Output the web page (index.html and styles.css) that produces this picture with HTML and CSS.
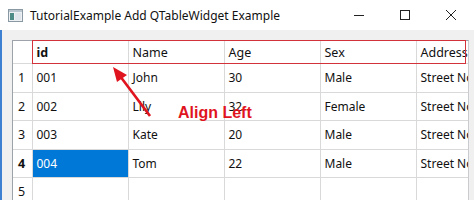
FILE: index.html
```html
<!DOCTYPE html>
<html lang="en">
<head>
    <meta charset="UTF-8">
    <title>TutorialExample Add QTableWidget Example</title>
    <link rel="stylesheet" href="styles.css">
</head>
<body>
    <div class="window">
        <div class="titlebar">
            <svg class="app-icon" width="15" height="13" viewBox="0 0 15 13">
                <rect x="0.5" y="0.5" width="14" height="12" fill="#eef1f3" stroke="#8a98a4"/>
                <rect x="1" y="1" width="13" height="2" fill="#b9c6d0"/>
                <rect x="2" y="4" width="4" height="7" fill="#4f8b86"/>
                <rect x="7" y="4" width="6" height="7" fill="#dfe5ea"/>
            </svg>
            <span class="title">TutorialExample Add QTableWidget Example</span>
            <div class="controls">
                <svg width="46" height="30" viewBox="0 0 46 30"><line x1="18" y1="15.5" x2="28" y2="15.5" stroke="#222" stroke-width="1"/></svg>
                <svg width="46" height="30" viewBox="0 0 46 30"><rect x="18.5" y="10.5" width="9" height="9" fill="none" stroke="#222" stroke-width="1"/></svg>
                <svg width="46" height="30" viewBox="0 0 46 30"><path d="M18 10 L28 20 M28 10 L18 20" stroke="#222" stroke-width="1"/></svg>
            </div>
        </div>
        <div class="client">
            <div class="table-frame">
                <table class="grid">
                    <colgroup>
                        <col class="c-vh"><col class="c-w"><col class="c-w"><col class="c-w"><col class="c-w"><col class="c-w">
                    </colgroup>
                    <tr class="hdr">
                        <th class="corner"></th>
                        <th class="bold">id</th><th>Name</th><th>Age</th><th>Sex</th><th>Address</th>
                    </tr>
                    <tr><td class="vh">1</td><td>001</td><td>John</td><td>30</td><td>Male</td><td>Street No</td></tr>
                    <tr><td class="vh">2</td><td>002</td><td>Lily</td><td>32</td><td>Female</td><td>Street No</td></tr>
                    <tr><td class="vh">3</td><td>003</td><td>Kate</td><td>20</td><td>Male</td><td>Street No</td></tr>
                    <tr><td class="vh bold">4</td><td class="sel">004</td><td>Tom</td><td>22</td><td>Male</td><td>Street No</td></tr>
                    <tr><td class="vh">5</td><td></td><td></td><td></td><td></td><td></td></tr>
                </table>
            </div>
        </div>

        <!-- annotation -->
        <div class="mark-box"></div>
        <svg class="arrow" width="474" height="200" viewBox="0 0 474 200">
            <line x1="150" y1="116" x2="120" y2="76" stroke="#e0141e" stroke-width="2.6"/>
            <polygon points="113,67 127,75 117,82" fill="#e0141e"/>
        </svg>
        <div class="note">Align Left</div>
    </div>
</body>
</html>
```

FILE: styles.css
```css
body {
    margin: 0;
    padding: 0;
    background: #f0f0f0;
    font-family: "Noto Sans", "Liberation Sans", sans-serif;
    overflow: hidden;
}
.window {
    position: relative;
    width: 474px;
    height: 200px;
    overflow: hidden;
    background: #f0f0f0;
}
.titlebar {
    height: 30px;
    background: #fff;
    display: flex;
    align-items: center;
}
.app-icon {
    margin-left: 8px;
    margin-right: 7px;
}
.title {
    font-size: 12px;
    color: #111;
    white-space: nowrap;
}
.controls {
    margin-left: auto;
    display: flex;
}
.controls svg {
    display: block;
}
.client {
    height: 170px;
    box-sizing: border-box;
    padding: 10px 0 0 10px;
    border-left: 2px solid #3d7fd1;
}
.table-frame {
    height: 160px;
    width: 455px;
    overflow: hidden;
    border-top: 1px solid #9ea3a9;
    border-left: 1px solid #9ea3a9;
    border-right: 1px solid #c9cbce;
    background: #fff;
}
.grid {
    border-collapse: collapse;
    table-layout: fixed;
    width: 499px;
    font-size: 12px;
    color: #111;
}
.c-vh { width: 19px; }
.c-w { width: 96px; }
.grid th, .grid td {
    border-right: 1px solid #d9d9d9;
    border-bottom: 1px solid #d9d9d9;
    text-align: left;
    padding: 0 0 0 4px;
    white-space: nowrap;
    overflow: hidden;
}
.grid th {
    font-weight: normal;
    height: 22px;
    font-size: 12.5px;
}
.grid td {
    height: 27.5px;
}
.grid .bold {
    font-weight: bold;
}
.grid .vh {
    padding-left: 5px;
    font-size: 12.5px;
}
.grid .sel {
    background: #0078d7;
    color: #fff;
}
.mark-box {
    position: absolute;
    left: 32px;
    top: 40px;
    width: 432px;
    height: 22px;
    border: 1.5px solid #d3323a;
}
.arrow {
    position: absolute;
    left: 0;
    top: 0;
}
.note {
    position: absolute;
    left: 178px;
    top: 104px;
    font-family: "Liberation Sans", Arial, sans-serif;
    font-weight: bold;
    font-size: 16px;
    color: #e0141e;
}
```
